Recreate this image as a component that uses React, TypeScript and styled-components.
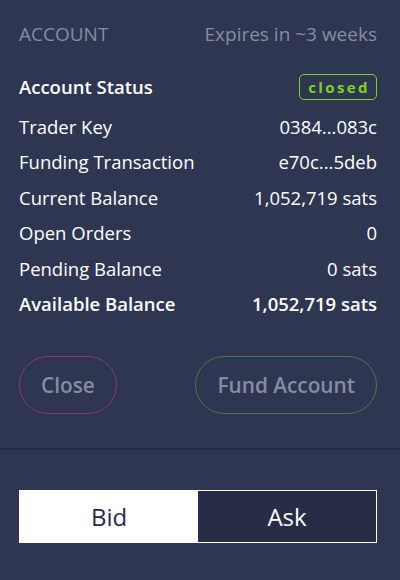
import styled, { createGlobalStyle } from "styled-components";

const Global = createGlobalStyle`
  html, body {
    margin: 0;
    padding: 0;
    background: #2f3652;
  }
  body {
    font-family: "Open Sans", "Noto Sans", sans-serif;
  }
`;

const Page = styled.div`
  width: 400px;
  height: 580px;
  display: flex;
  flex-direction: column;
  background: #2f3652;
  overflow: hidden;
`;

const AccountSection = styled.section`
  padding: 22px 23px 0 19px;
  height: 426px;
  display: flex;
  flex-direction: column;
`;

const Header = styled.div`
  display: flex;
  justify-content: space-between;
  align-items: center;
  font-size: 19px;
  color: #878ca1;
  line-height: 24px;
`;

const Rows = styled.div`
  margin-top: 19px;
  display: flex;
  flex-direction: column;
`;

const Row = styled.div<{ $bold?: boolean; $tall?: boolean }>`
  display: flex;
  justify-content: space-between;
  align-items: center;
  height: ${(p) => (p.$tall ? "43.5px" : "35.5px")};
  font-size: 18.5px;
  color: #ffffff;
  font-weight: ${(p) => (p.$bold ? 600 : 400)};
`;

const Badge = styled.span`
  border: 1px solid #7ed321;
  border-radius: 5px;
  color: #7ed321;
  font-size: 15px;
  font-weight: 700;
  letter-spacing: 2.4px;
  padding: 1px 6px 1px 8px;
  line-height: 22px;
`;

const Actions = styled.div`
  margin-top: 34px;
  display: flex;
  justify-content: space-between;
`;

const PillButton = styled.button<{ $tone: "danger" | "success" }>`
  height: 58px;
  padding: 0 21px;
  border-radius: 29px;
  background: transparent;
  border: 1px solid ${(p) => (p.$tone === "danger" ? "#8a3d63" : "#4b7a48")};
  color: #878ca1;
  font-family: inherit;
  font-size: 20.8px;
  font-weight: 600;
`;

const Divider = styled.div`
  height: 2px;
  background: #262c45;
`;

const OrderSection = styled.section`
  padding: 40px 23px 0 19px;
`;

const Toggle = styled.div`
  display: flex;
  height: 51px;
  border: 1px solid #ffffff;
`;

const ToggleOption = styled.button<{ $active?: boolean }>`
  flex: 1;
  border: none;
  background: ${(p) => (p.$active ? "#ffffff" : "#272c47")};
  color: ${(p) => (p.$active ? "#272c47" : "#ffffff")};
  font-family: inherit;
  font-size: 24px;
  font-weight: 400;
`;

const rows = [
  { label: "Trader Key", value: "0384...083c" },
  { label: "Funding Transaction", value: "e70c...5deb" },
  { label: "Current Balance", value: "1,052,719 sats" },
  { label: "Open Orders", value: "0" },
  { label: "Pending Balance", value: "0 sats" },
];

export default function App() {
  return (
    <Page>
      <Global />
      <AccountSection>
        <Header>
          <span>ACCOUNT</span>
          <span>Expires in ~3 weeks</span>
        </Header>
        <Rows>
          <Row $bold $tall>
            <span>Account Status</span>
            <Badge>closed</Badge>
          </Row>
          {rows.map((r) => (
            <Row key={r.label}>
              <span>{r.label}</span>
              <span>{r.value}</span>
            </Row>
          ))}
          <Row $bold>
            <span>Available Balance</span>
            <span>1,052,719 sats</span>
          </Row>
        </Rows>
        <Actions>
          <PillButton $tone="danger">Close</PillButton>
          <PillButton $tone="success">Fund Account</PillButton>
        </Actions>
      </AccountSection>
      <Divider />
      <OrderSection>
        <Toggle>
          <ToggleOption $active>Bid</ToggleOption>
          <ToggleOption>Ask</ToggleOption>
        </Toggle>
      </OrderSection>
    </Page>
  );
}
